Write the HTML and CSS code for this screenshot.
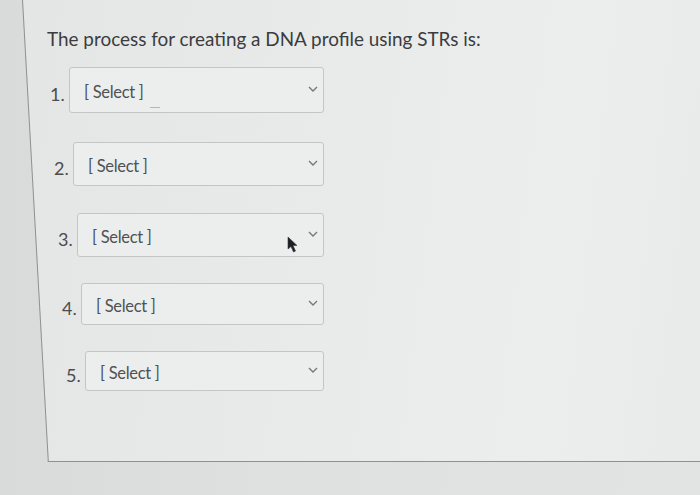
FILE: index.html
```html
<!DOCTYPE html>
<html lang="en">
<head>
<meta charset="utf-8">
<title>DNA profile question</title>
<link rel="stylesheet" href="styles.css">
</head>
<body>
<div class="card">
  <h1 class="title">The process for creating a DNA profile using STRs is:</h1>
  <ol class="list">
    <li class="row">
      <span class="num">1.</span>
      <div class="select">
        <span class="label">[ Select ]<span class="mark"></span></span>
        <svg class="chev" width="10" height="6" viewBox="0 0 10 6"><path d="M1 1 L5 5 L9 1" fill="none" stroke="#76787a" stroke-width="1.4"/></svg>
      </div>
    </li>
    <li class="row">
      <span class="num">2.</span>
      <div class="select">
        <span class="label">[ Select ]</span>
        <svg class="chev" width="10" height="6" viewBox="0 0 10 6"><path d="M1 1 L5 5 L9 1" fill="none" stroke="#76787a" stroke-width="1.4"/></svg>
      </div>
    </li>
    <li class="row">
      <span class="num">3.</span>
      <div class="select">
        <span class="label">[ Select ]</span>
        <svg class="chev" width="10" height="6" viewBox="0 0 10 6"><path d="M1 1 L5 5 L9 1" fill="none" stroke="#76787a" stroke-width="1.4"/></svg>
        <svg class="cursor" width="12" height="17" viewBox="0 0 12 17"><path d="M1 1 L1 13 L4 10.5 L6.5 16 L8.5 15 L6 9.5 L10 9.5 Z" fill="#1e1f22" stroke="#3a3b3e" stroke-width="0.6"/></svg>
      </div>
    </li>
    <li class="row">
      <span class="num">4.</span>
      <div class="select">
        <span class="label">[ Select ]</span>
        <svg class="chev" width="10" height="6" viewBox="0 0 10 6"><path d="M1 1 L5 5 L9 1" fill="none" stroke="#76787a" stroke-width="1.4"/></svg>
      </div>
    </li>
    <li class="row">
      <span class="num">5.</span>
      <div class="select">
        <span class="label">[ Select ]</span>
        <svg class="chev" width="10" height="6" viewBox="0 0 10 6"><path d="M1 1 L5 5 L9 1" fill="none" stroke="#76787a" stroke-width="1.4"/></svg>
      </div>
    </li>
  </ol>
</div>
</body>
</html>
```

FILE: styles.css
```css
html, body {
  margin: 0;
  padding: 0;
  width: 700px;
  height: 495px;
  overflow: hidden;
}

body {
  background: linear-gradient(to right, #d9dbda, #dfe1e0 40%, #e2e4e3);
  font-family: Lato, "Open Sans", sans-serif;
}

.card {
  position: relative;
  isolation: isolate;
  overflow: hidden;
  margin-left: 22px;
  width: 678px;
  height: 462px;
  padding-top: 27px;
  box-sizing: border-box;
}

.card::before {
  content: "";
  position: absolute;
  inset: 0;
  z-index: -1;
  transform-origin: top left;
  transform: skewX(3.2deg);
  border-left: 1px solid #8f9190;
  border-bottom: 1px solid #8f9190;
  background: linear-gradient(100deg, #e4e6e5 0%, #e9ebea 45%, #eceeed 75%, #e8eae9 100%);
}

.title {
  margin: 0 0 0 25px;
  font-size: 18.9px;
  font-weight: 400;
  line-height: 24px;
  color: #3b3c3e;
}

.list {
  list-style: none;
  margin: 0;
  padding: 0;
  width: 302px;
}

.row {
  display: flex;
  align-items: center;
}

.num {
  width: 19px;
  flex: none;
  font-size: 18px;
  color: #4b4c4e;
  padding-top: 8px;
}

.select {
  position: relative;
  flex: 1;
  display: flex;
  align-items: center;
  justify-content: space-between;
  box-sizing: border-box;
  padding: 0 5px 0 14px;
  border: 1px solid #c4c6c5;
  border-radius: 3px;
  background: #eceeed;
}

.label {
  font-size: 16.5px;
  letter-spacing: -0.3px;
  color: #4f5153;
  display: flex;
  align-items: flex-end;
  padding-top: 4px;
}

.mark {
  display: inline-block;
  width: 10px;
  height: 1px;
  margin-left: 6px;
  margin-bottom: -6px;
  background: #b5b7b6;
}

.chev {
  flex: none;
  margin-top: -2px;
}

.cursor {
  position: absolute;
  left: 209px;
  top: 22px;
}

.row:nth-child(1) { margin-top: 16px; padding-left: 28px; }
.row:nth-child(1) .select { height: 46px; }
.row:nth-child(2) { margin-top: 29px; padding-left: 32px; }
.row:nth-child(2) .select { height: 44px; }
.row:nth-child(3) { margin-top: 27px; padding-left: 36px; }
.row:nth-child(3) .select { height: 44px; }
.row:nth-child(4) { margin-top: 26px; padding-left: 40px; }
.row:nth-child(4) .select { height: 42px; }
.row:nth-child(5) { margin-top: 26px; padding-left: 44px; }
.row:nth-child(5) .select { height: 40px; }
```
